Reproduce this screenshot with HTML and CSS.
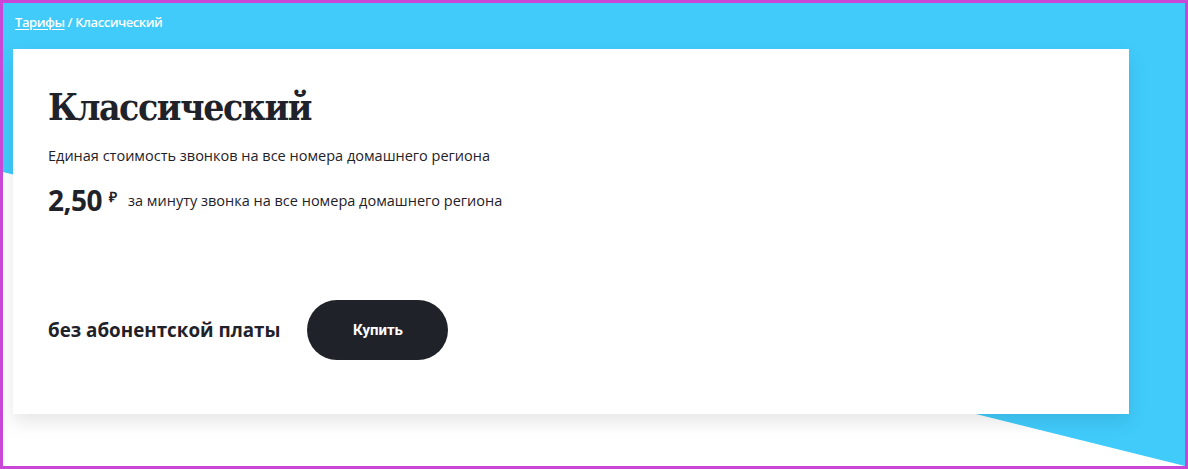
FILE: index.html
```html
<!DOCTYPE html>
<html>
<head>
    <title>Классический</title>
    <link rel="stylesheet" href="styles.css">
</head>
<body>
    <div class="page">
        <div class="breadcrumbs">
            <a href="#" class="crumb-link">Тарифы</a>
            <span class="crumb-sep">/</span>
            <span class="crumb-current">Классический</span>
        </div>

        <div class="tariff-card">
            <h1 class="tariff-title">Классический</h1>
            <p class="tariff-desc">Единая стоимость звонков на все номера домашнего региона</p>

            <div class="price-row">
                <span class="price-value">2,50</span>
                <span class="price-currency">₽</span>
                <span class="price-note">за минуту звонка на все номера домашнего региона</span>
            </div>

            <div class="buy-row">
                <span class="fee">без абонентской платы</span>
                <button class="buy-button">Купить</button>
            </div>
        </div>
    </div>
</body>
</html>
```

FILE: styles.css
```css
html, body {
    margin: 0;
    padding: 0;
}
body {
    width: 1188px;
    height: 469px;
    box-sizing: border-box;
    border: 3px solid #c847d6;
    font-family: "Open Sans", Arial, sans-serif;
    color: #1f2229;
    background: #ffffff;
    overflow: hidden;
}
.page {
    position: relative;
    height: 100%;
    padding: 10px 56px 0 10px;
    box-sizing: border-box;
}
/* cyan background with the white diagonal cut */
.page::before {
    content: "";
    position: absolute;
    top: 0;
    left: 0;
    right: 0;
    bottom: 0;
    background: #40cbfb;
    clip-path: polygon(0 0, 100% 0, 100% 100%, 0 36.5%);
}
.breadcrumbs {
    position: relative;
    height: 18px;
    padding-left: 2px;
    display: flex;
    align-items: center;
    gap: 3px;
    font-size: 13px;
    font-weight: 600;
    color: #ffffff;
    letter-spacing: -0.45px;
}
.crumb-link {
    color: #ffffff;
    text-decoration: underline;
    text-underline-offset: 2px;
}
.tariff-card {
    position: relative;
    margin-top: 18px;
    height: 365px;
    box-sizing: border-box;
    padding: 33px 35px 54px 35px;
    background: #ffffff;
    box-shadow: 0 8px 18px rgba(0, 0, 0, 0.10);
    display: flex;
    flex-direction: column;
}
.tariff-title {
    margin: 0;
    font-family: "DejaVu Serif Condensed", "DejaVu Serif", serif;
    font-stretch: condensed;
    font-size: 37px;
    line-height: 50px;
    font-weight: bold;
    letter-spacing: -1.4px;
}
.tariff-desc {
    margin: 14px 0 0 0;
    font-size: 14.5px;
    line-height: 20px;
}
.price-row {
    margin-top: 16px;
    display: flex;
    align-items: center;
}
.price-value {
    font-size: 28px;
    font-weight: bold;
    line-height: 36px;
    letter-spacing: -0.5px;
}
.price-currency {
    margin-left: 7px;
    font-size: 14px;
    font-weight: bold;
    align-self: flex-start;
    margin-top: 5px;
}
.price-note {
    margin-left: 11px;
    font-size: 14.5px;
    line-height: 20px;
    margin-top: 2px;
}
.buy-row {
    margin-top: auto;
    display: flex;
    align-items: center;
    gap: 27px;
}
.fee {
    font-size: 18.8px;
    font-weight: bold;
}
.buy-button {
    width: 141px;
    height: 60px;
    border: none;
    border-radius: 30px;
    background: #1f2229;
    color: #ffffff;
    font-family: Roboto, "Open Sans", sans-serif;
    font-weight: bold;
    font-size: 15px;
    cursor: pointer;
}
```
